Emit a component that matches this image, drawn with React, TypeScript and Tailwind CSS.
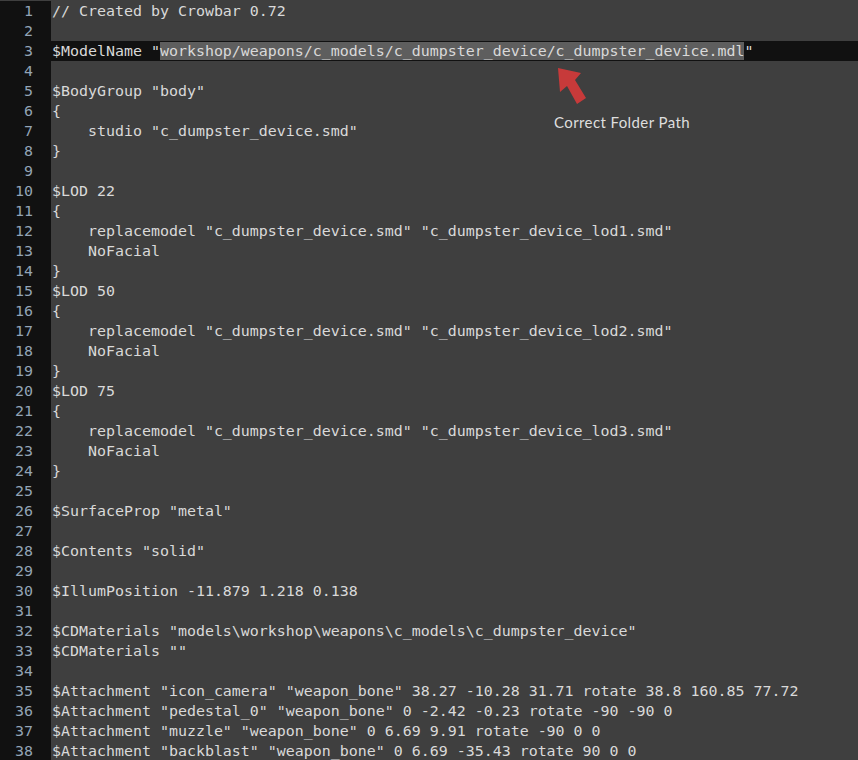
const lines: string[] = [
  '// Created by Crowbar 0.72',
  '',
  '$ModelName "workshop/weapons/c_models/c_dumpster_device/c_dumpster_device.mdl"',
  '',
  '$BodyGroup "body"',
  '{',
  '    studio "c_dumpster_device.smd"',
  '}',
  '',
  '$LOD 22',
  '{',
  '    replacemodel "c_dumpster_device.smd" "c_dumpster_device_lod1.smd"',
  '    NoFacial',
  '}',
  '$LOD 50',
  '{',
  '    replacemodel "c_dumpster_device.smd" "c_dumpster_device_lod2.smd"',
  '    NoFacial',
  '}',
  '$LOD 75',
  '{',
  '    replacemodel "c_dumpster_device.smd" "c_dumpster_device_lod3.smd"',
  '    NoFacial',
  '}',
  '',
  '$SurfaceProp "metal"',
  '',
  '$Contents "solid"',
  '',
  '$IllumPosition -11.879 1.218 0.138',
  '',
  '$CDMaterials "models\\workshop\\weapons\\c_models\\c_dumpster_device"',
  '$CDMaterials ""',
  '',
  '$Attachment "icon_camera" "weapon_bone" 38.27 -10.28 31.71 rotate 38.8 160.85 77.72',
  '$Attachment "pedestal_0" "weapon_bone" 0 -2.42 -0.23 rotate -90 -90 0',
  '$Attachment "muzzle" "weapon_bone" 0 6.69 9.91 rotate -90 0 0',
  '$Attachment "backblast" "weapon_bone" 0 6.69 -35.43 rotate 90 0 0',
]

const mono = { fontFamily: '"DejaVu Sans Mono", "Liberation Mono", monospace' }

function CodeLine({ text, index }: { text: string; index: number }) {
  const current = index === 2

  if (current) {
    const open = text.indexOf('"') + 1
    const close = text.lastIndexOf('"')
    return (
      <div className="h-[20px] bg-[#111111] whitespace-pre pl-[1px]">
        {text.slice(0, open)}
        <span className="bg-[#5e5e5e]">{text.slice(open, close)}</span>
        {text.slice(close)}
      </div>
    )
  }

  return <div className="h-[20px] whitespace-pre pl-[1px]">{text || ' '}</div>
}

export default function App() {
  return (
    <div className="relative w-[858px] h-[760px] overflow-hidden flex bg-[#3f3f3f] pt-[1px]">
      <div
        className="w-[51px] shrink-0 bg-[#111111] text-[#93a4b6] text-[14.95px] leading-[20px] text-right pr-[18px]"
        style={mono}
      >
        {lines.map((_, i) => (
          <div key={i} className="h-[20px]">
            {i + 1}
          </div>
        ))}
      </div>

      <div className="flex-1 text-[#d9d9d9] text-[14.95px] leading-[20px]" style={mono}>
        {lines.map((line, i) => (
          <CodeLine key={i} text={line} index={i} />
        ))}
      </div>

      <svg className="absolute left-[540px] top-[60px]" width="60" height="50" viewBox="0 0 60 50">
        <polygon points="18,8 20,32 27,26 37,44 46,38 35,20 41,13" fill="#c73a3a" />
      </svg>

      <div
        className="absolute left-[554px] top-[112px] text-[15px] leading-[20px] text-[#dedede] tracking-[0.4px]"
        style={{ fontFamily: 'Lato, "Open Sans", sans-serif' }}
      >
        Correct Folder Path
      </div>
    </div>
  )
}
